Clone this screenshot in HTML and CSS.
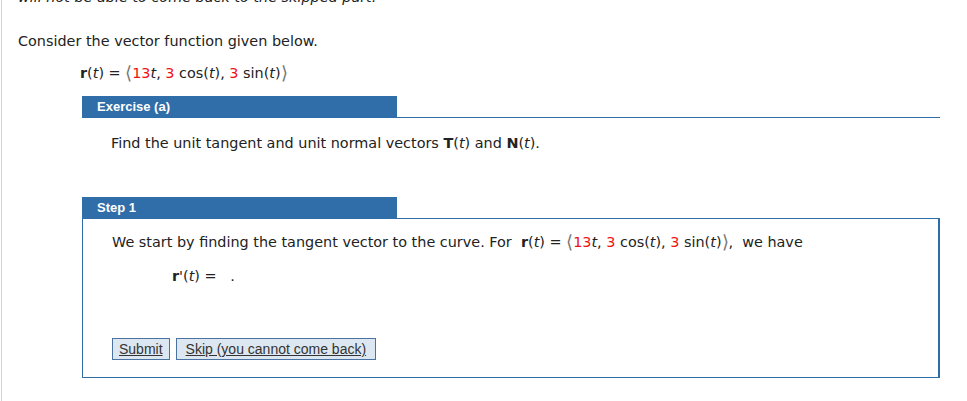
FILE: index.html
```html
<!DOCTYPE html>
<html lang="en">
<head>
    <meta charset="UTF-8">
    <title>Vector function - Exercise (a)</title>
    <link rel="stylesheet" href="styles.css">
</head>
<body>
    <div class="page">
        <p class="cutoff">will not be able to come back to the skipped part.</p>

        <p class="intro">Consider the vector function given below.</p>
        <p class="equation">
            <b>r</b>(<i>t</i>) = <span class="angle">&#10216;</span><span class="red">13</span><i>t</i>, <span class="red">3</span> cos(<i>t</i>), <span class="red">3</span> sin(<i>t</i>)<span class="angle">&#10217;</span>
        </p>

        <div class="section">
            <div class="section-head"><div class="tab">Exercise (a)</div></div>
            <p class="task">Find the unit tangent and unit normal vectors <b>T</b>(<i>t</i>) and <b>N</b>(<i>t</i>).</p>
        </div>

        <div class="section step">
            <div class="tab">Step 1</div>
            <div class="step-box">
                <p class="step-text">We start by finding the tangent vector to the curve. For&nbsp; <b>r</b>(<i>t</i>) = <span class="angle">&#10216;</span><span class="red">13</span><i>t</i>, <span class="red">3</span> cos(<i>t</i>), <span class="red">3</span> sin(<i>t</i>)<span class="angle">&#10217;</span>,&nbsp; we have</p>
                <p class="answer"><b>r</b>'(<i>t</i>) = &nbsp; .</p>
                <div class="buttons">
                    <button class="btn">Submit</button>
                    <button class="btn btn-skip">Skip (you cannot come back)</button>
                </div>
            </div>
        </div>
    </div>
</body>
</html>
```

FILE: styles.css
```css
body {
    margin: 0;
    background: #fff;
    color: #222;
    font-family: "DejaVu Sans", Verdana, sans-serif;
    font-size: 14.4px;
}
p {
    margin: 0;
}
.page {
    margin-left: 1px;
    border-left: 1px solid #d4d4d4;
    padding-left: 16px;
    padding-right: 27px;
    height: 401px;
    overflow: hidden;
}
.cutoff {
    font-style: italic;
    margin-top: -11px;
    line-height: 16px;
}
.intro {
    margin-top: 27px;
    line-height: 18px;
}
.equation {
    margin: 12px 0 0 62px;
    line-height: 22px;
}
.red {
    color: #ee1111;
}
.angle {
    color: #777;
    font-size: 18px;
    font-weight: 300;
    vertical-align: -1px;
}
.section {
    margin-left: 64px;
}
.section-head {
    margin-top: 12px;
    border-bottom: 1px solid #2e6da8;
}
.tab {
    width: 300px;
    height: 21px;
    line-height: 21px;
    padding-left: 15px;
    background: #2f6ea9;
    color: #fff;
    font-family: "Liberation Sans", Arial, sans-serif;
    font-weight: bold;
    font-size: 13px;
}
.task {
    margin: 16px 0 0 29px;
    line-height: 18px;
}
.step {
    margin-top: 45px;
}
.step-box {
    border: 1px solid #2e6da8;
    border-right-width: 2px;
    height: 158px;
    padding-left: 29px;
}
.step-text {
    margin-top: 13px;
    line-height: 20px;
}
.answer {
    margin: 14px 0 0 60px;
    line-height: 20px;
}
.buttons {
    margin-top: 52px;
    display: flex;
    gap: 6px;
}
.btn {
    font-family: "Liberation Sans", Arial, sans-serif;
    font-size: 14px;
    color: #333;
    text-decoration: underline;
    background: #dde7f1;
    border: 1px solid #4a72a2;
    padding: 1px 6px;
    height: 22px;
    line-height: 18px;
}
.btn-skip {
    padding: 1px 9px;
}
```
